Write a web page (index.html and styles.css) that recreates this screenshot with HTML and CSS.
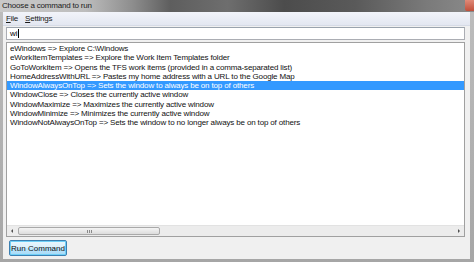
FILE: index.html
```html
<!DOCTYPE html>
<html>
<head>
<meta charset="utf-8">
<link rel="stylesheet" href="styles.css">
</head>
<body>
<div class="window">
  <div class="titlebar">
    <span class="title">Choose a command to run</span>
    <span class="close"></span>
  </div>
  <div class="frame">
    <div class="client">
      <div class="menubar">
        <span class="menu"><u>F</u>ile</span>
        <span class="menu"><u>S</u>ettings</span>
      </div>
      <div class="textbox"><span>wi</span><span class="caret"></span></div>
      <div class="listbox">
        <div class="items">
          <div class="item">eWindows =&gt; Explore C:\Windows</div>
          <div class="item">eWorkItemTemplates =&gt; Explore the Work Item Templates folder</div>
          <div class="item">GoToWorkItem =&gt; Opens the TFS work items (provided in a comma-separated list)</div>
          <div class="item">HomeAddressWithURL =&gt; Pastes my home address with a URL to the Google Map</div>
          <div class="item selected">WindowAlwaysOnTop =&gt; Sets the window to always be on top of others</div>
          <div class="item">WindowClose =&gt; Closes the currently active window</div>
          <div class="item">WindowMaximize =&gt; Maximizes the currently active window</div>
          <div class="item">WindowMinimize =&gt; Minimizes the currently active window</div>
          <div class="item">WindowNotAlwaysOnTop =&gt; Sets the window to no longer always be on top of others</div>
        </div>
        <div class="hscroll">
          <span class="arrow left"></span>
          <div class="track">
            <div class="thumb"><span class="grip"></span></div>
          </div>
          <span class="arrow right"></span>
        </div>
      </div>
      <div class="footer">
        <button class="btn">Run Command</button>
      </div>
    </div>
  </div>
</div>
</body>
</html>
```

FILE: styles.css
```css
html, body {
  margin: 0;
  padding: 0;
  width: 474px;
  height: 262px;
  overflow: hidden;
  font-family: "Liberation Sans", Arial, sans-serif;
}

.window {
  width: 474px;
  height: 262px;
  display: flex;
  flex-direction: column;
  background: #a8a8a8;
}

.titlebar {
  height: 12px;
  display: flex;
  align-items: center;
  justify-content: space-between;
  background: linear-gradient(90deg, #c9c9c9 0%, #bdbdbd 18%, #8d8d8d 28%, #5e5e5e 36%, #6e6e6e 48%, #4c4c4c 60%, #5a5a5a 75%, #7a7a7a 90%, #8a8a8a 100%);
}

.title {
  font-size: 8px;
  letter-spacing: -0.2px;
  color: #1c1c1c;
  padding-left: 2px;
  line-height: 12px;
  white-space: nowrap;
}

.close {
  width: 9px;
  height: 11px;
  align-self: flex-start;
  background: linear-gradient(180deg, #e08a78, #c0503c);
  border-bottom-left-radius: 2px;
}

.frame {
  flex: 1;
  display: flex;
  padding: 0 4px 3px 3px;
  background: linear-gradient(180deg, #bcbcbc, #a6a6a6);
}

.client {
  flex: 1;
  display: flex;
  flex-direction: column;
  background: #f0f0f0;
}

.menubar {
  height: 14px;
  display: flex;
  align-items: center;
  gap: 7px;
  padding-left: 3px;
  background: linear-gradient(180deg, #f2f4fa, #e3e7f1);
  border-bottom: 1px solid #d6dbe6;
  box-sizing: border-box;
}

.menu {
  font-size: 8px;
  letter-spacing: -0.2px;
  color: #1a1a1a;
}

.textbox {
  margin: 1px 5px 0 3px;
  height: 13px;
  box-sizing: border-box;
  border: 1px solid #abadb3;
  border-top-color: #9aa3ad;
  background: #fff;
  display: flex;
  align-items: center;
  padding-left: 3px;
  font-size: 8px;
  color: #000;
}

.caret {
  width: 1px;
  height: 9px;
  background: #000;
}

.listbox {
  margin: 2px 5px 0 3px;
  flex: 1;
  border: 1px solid #a0a0a0;
  background: #fff;
  display: flex;
  flex-direction: column;
  overflow: hidden;
}

.items {
  flex: 1;
  padding-top: 1px;
}

.item {
  height: 9.3px;
  line-height: 9.3px;
  font-size: 8px;
  letter-spacing: -0.15px;
  color: #111;
  padding-left: 3px;
  white-space: nowrap;
}

.item.selected {
  background: #3399ff;
  color: #fff;
}

.hscroll {
  height: 10px;
  display: flex;
  align-items: center;
  background: #ececec;
  border-top: 1px solid #e2e2e2;
}

.arrow {
  width: 10px;
  height: 10px;
  position: relative;
}

.arrow.left::after {
  content: "";
  position: absolute;
  left: 4px;
  top: 3px;
  border-right: 2px solid #505050;
  border-top: 2px solid transparent;
  border-bottom: 2px solid transparent;
}

.arrow.right::after {
  content: "";
  position: absolute;
  right: 4px;
  top: 3px;
  border-left: 2px solid #505050;
  border-top: 2px solid transparent;
  border-bottom: 2px solid transparent;
}

.track {
  flex: 1;
  height: 10px;
  display: flex;
  align-items: center;
}

.thumb {
  width: 142px;
  height: 8px;
  margin-left: 1px;
  box-sizing: border-box;
  border: 1px solid #a9a9a9;
  border-radius: 2px;
  background: linear-gradient(180deg, #f4f4f4, #dcdcdc);
  display: flex;
  align-items: center;
  justify-content: center;
}

.grip {
  width: 5px;
  height: 3px;
  background: repeating-linear-gradient(90deg, #8a8a8a 0 1px, transparent 1px 2px);
}

.footer {
  height: 22px;
  display: flex;
  align-items: center;
  padding-left: 6px;
}

.btn {
  margin: 0;
  height: 16px;
  width: 58px;
  padding: 0;
  white-space: nowrap;
  font-family: "Liberation Sans", Arial, sans-serif;
  font-size: 8px;
  color: #111;
  border: 1px solid #3c7fb1;
  border-radius: 2px;
  background: linear-gradient(180deg, #eaf6fd 0%, #d9f0fc 50%, #bee6fd 51%, #a7d9f5 100%);
  box-shadow: inset 0 0 0 1px #6fd0f7;
}
```
